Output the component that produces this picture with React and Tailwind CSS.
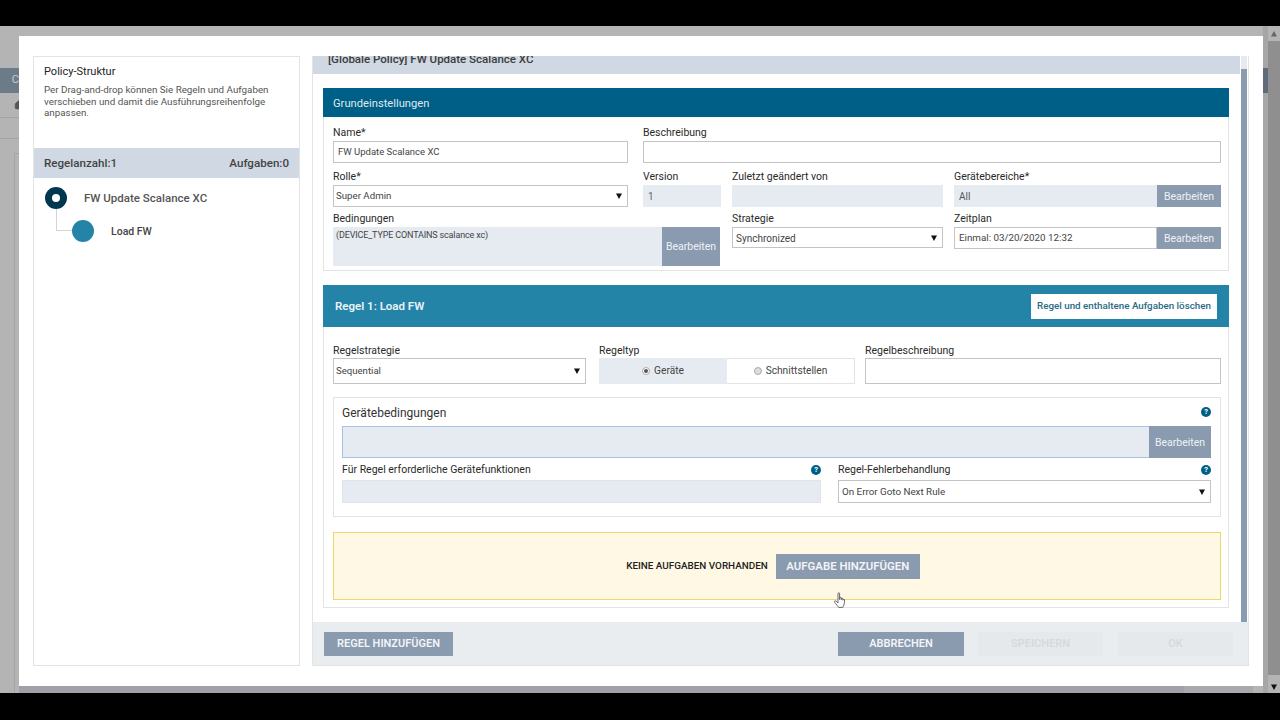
import React from "react";
import { House } from "lucide-react";

const Label = ({ children, className = "h-[18px]" }) => (
  <div className={`text-[10.5px] leading-[20px] text-[#2a2a2a] whitespace-nowrap ${className}`}>
    {children}
  </div>
);

const Caret = ({ className = "", color = "#111111" }) => (
  <svg width="6" height="6" viewBox="0 0 6 6" className={`shrink-0 ${className}`}>
    <polygon points="0,0.5 6,0.5 3,6" fill={color} />
  </svg>
);

const EditButton = ({ className = "" }) => (
  <div className={`flex items-center justify-center bg-[#8a9bb0] pt-[1px] text-[10.5px] text-[#eef1f5] ${className}`}>
    Bearbeiten
  </div>
);

const Help = ({ className = "" }) => (
  <span className={`flex h-[10px] w-[10px] items-center justify-center rounded-full bg-[#005f87] text-[7.5px] font-bold leading-none text-white ${className}`}>
    ?
  </span>
);

const HandCursor = () => (
  <svg className="absolute left-[833px] top-[592px]" width="15" height="18" viewBox="0 0 14 18">
    <path
      d="M4.5 1.5c0-1 1.6-1 1.6 0v6l.2-1.5c.2-.9 1.5-.8 1.5.1v1.6l.2-1c.2-.8 1.4-.7 1.4.2v1.3l.3-.6c.3-.7 1.3-.5 1.3.3 0 1.6-.1 3.8-.6 5.1-.5 1.3-1.1 2.4-1.1 2.4H5.2S3.8 13.6 2.6 12.1C1.8 11.1.8 10 1 9.3c.2-.7 1-.8 1.6-.2l1.9 1.8z"
      fill="#ffffff"
      stroke="#444444"
      strokeWidth="0.8"
    />
  </svg>
);

export default function App() {
  return (
    <div className="relative flex h-[720px] w-[1280px] flex-col overflow-hidden bg-black font-['Roboto',sans-serif]">
      <div className="h-[26px] shrink-0 bg-black" />

      <div className="flex h-[667px] shrink-0 bg-[#b4b4b4]">
        {/* page behind the dialog, left edge */}
        <div className="flex w-[19px] shrink-0 flex-col pt-[42px]">
          <div className="flex h-[25px] items-center justify-end bg-[#6b7b88] text-[11px] text-[#c8ced3]">C</div>
          <div className="flex h-[25px] items-center overflow-hidden border-b border-[#a5a5a5] pl-[14px]">
            <House size={10} fill="#555555" className="shrink-0 text-[#555]" />
          </div>
          <div className="h-[21px] border-b border-[#a5a5a5]" />
          <div className="ml-[14px] mt-[14px] flex-1 border-l border-t border-[#a5a5a5]" />
        </div>

        <div className="flex w-[1244px] shrink-0 flex-col">
          <div className="h-[10px] shrink-0" />
          <div className="flex h-[650px] shrink-0 gap-[12px] bg-white pl-[14px] pr-[14px] pt-[20px] pb-[20px]">
            {/* Policy-Struktur */}
            <div className="flex w-[267px] shrink-0 flex-col border border-[#e3e3e3]">
              <div className="h-[91px] shrink-0 px-[10px] pt-[8px]">
                <div className="text-[11px] leading-[14px] text-[#222]">Policy-Struktur</div>
                <div className="mt-[5px] text-[9.8px] leading-[11.5px] text-[#555]">
                  Per Drag-and-drop können Sie Regeln und Aufgaben
                  <br />
                  verschieben und damit die Ausführungsreihenfolge
                  <br />
                  anpassen.
                </div>
              </div>
              <div className="flex h-[30px] shrink-0 items-center justify-between bg-[#cfd8e3] px-[10px] pt-[1px] text-[11.6px] font-medium text-[#444]">
                <span>Regelanzahl:1</span>
                <span>Aufgaben:0</span>
              </div>
              <div className="pl-[11px] pt-[9px]">
                <div className="flex items-center">
                  <span className="flex h-[22px] w-[22px] items-center justify-center rounded-full bg-[#00384f]">
                    <span className="h-[8px] w-[8px] rounded-full bg-white" />
                  </span>
                  <span className="ml-[17px] pt-[1px] text-[11.5px] font-medium text-[#555]">FW Update Scalance XC</span>
                </div>
                <div className="relative mt-[11px] flex items-center pl-[27px]">
                  <span className="absolute left-[11px] top-[-11px] h-[22px] w-[16px] border-b border-l border-[#d4d4d4]" />
                  <span className="h-[22px] w-[22px] rounded-full bg-[#2484a8]" />
                  <span className="ml-[17px] pt-[1px] text-[10.5px] font-medium text-[#444]">Load FW</span>
                </div>
              </div>
            </div>

            {/* Editor */}
            <div className="flex w-[937px] shrink-0 flex-col border-b border-r border-l border-[#e3e3e3]">
              <div className="flex h-[566px] shrink-0 overflow-hidden">
                <div className="flex w-[927px] shrink-0 flex-col">
                  <div className="h-[18px] shrink-0 overflow-hidden bg-[#cfd8e3] pl-[15px]">
                    <div className="mt-[-5px] text-[11.5px] font-medium leading-[16px] text-[#3c3c3c]">
                      [Globale Policy] FW Update Scalance XC
                    </div>
                  </div>

                  <div className="ml-[10px] w-[906px] mt-[14px] h-[183px] shrink-0 border border-[#e3e3e3]">
                    <div className="-mx-px -mt-px flex h-[29px] items-center bg-[#005f87] px-[10px] pt-[3px] text-[11.2px] text-[#dfe9ef]">
                      Grundeinstellungen
                    </div>
                    <div className="pl-[9px] pr-[7px] pt-[6px]">
                      <div className="flex h-[46px] gap-[15px]">
                        <div className="w-[295px] shrink-0">
                          <Label>Name*</Label>
                          <div className="flex h-[22px] items-center border border-[#c4c4c4] px-[4px] text-[9.5px] text-[#444]">
                            FW Update Scalance XC
                          </div>
                        </div>
                        <div className="min-w-0 flex-1">
                          <Label>Beschreibung</Label>
                          <div className="h-[22px] border border-[#c4c4c4]" />
                        </div>
                      </div>
                      <div className="mt-[-2px] flex h-[42px]">
                        <div className="w-[295px] shrink-0">
                          <Label>Rolle*</Label>
                          <div className="flex h-[22px] items-center justify-between border border-[#c4c4c4] pl-[2px] pr-[5px] text-[9.7px] text-[#444]">
                            Super Admin
                            <Caret />
                          </div>
                        </div>
                        <div className="ml-[15px] w-[78px] shrink-0">
                          <Label>Version</Label>
                          <div className="flex h-[22px] items-center bg-[#e6ebf2] px-[5px] text-[10px] text-[#666]">1</div>
                        </div>
                        <div className="ml-[11px] w-[211px] shrink-0">
                          <Label>Zuletzt geändert von</Label>
                          <div className="h-[22px] bg-[#e6ebf2]" />
                        </div>
                        <div className="ml-[11px] min-w-0 flex-1">
                          <Label>Gerätebereiche*</Label>
                          <div className="flex h-[22px]">
                            <div className="flex flex-1 items-center bg-[#e6ebf2] px-[5px] text-[10px] text-[#555]">All</div>
                            <EditButton className="w-[64px]" />
                          </div>
                        </div>
                      </div>
                      <div className="flex">
                        <div className="w-[387px] shrink-0">
                          <Label>Bedingungen</Label>
                          <div className="flex h-[39px]">
                            <div className="flex-1 bg-[#e6ebf2] px-[3px] pt-[2px] text-[9px] leading-[12px] tracking-[-0.15px] text-[#444]">
                              (DEVICE_TYPE CONTAINS scalance xc)
                            </div>
                            <EditButton className="w-[58px]" />
                          </div>
                        </div>
                        <div className="ml-[12px] w-[211px] shrink-0">
                          <Label>Strategie</Label>
                          <div className="flex h-[21px] items-center justify-between border border-[#c4c4c4] pl-[3px] pr-[5px] pt-[1px] text-[10px] text-[#444]">
                            Synchronized
                            <Caret />
                          </div>
                        </div>
                        <div className="ml-[11px] min-w-0 flex-1">
                          <Label>Zeitplan</Label>
                          <div className="flex h-[22px]">
                            <div className="flex flex-1 items-center border border-[#c4c4c4] px-[4px] text-[9.8px] text-[#444]">
                              Einmal: 03/20/2020 12:32
                            </div>
                            <EditButton className="w-[64px]" />
                          </div>
                        </div>
                      </div>
                    </div>
                  </div>

                  <div className="ml-[10px] w-[906px] mt-[14px] h-[323px] shrink-0 border border-[#e3e3e3]">
                    <div className="-mx-px -mt-px flex h-[42px] items-center justify-between bg-[#2484a8] pl-[12px] pr-[12px] text-[11.5px] font-semibold text-[#e8f2f6]">
                      <span className="pt-[1px]">Regel 1: Load FW</span>
                      <div className="flex h-[25px] w-[186px] items-center justify-center whitespace-nowrap bg-white text-[9.8px] font-medium text-[#2a6a85]">
                        Regel und enthaltene Aufgaben löschen
                      </div>
                    </div>
                    <div className="pl-[9px] pr-[7px] pt-[14px]">
                      <div className="flex">
                        <div className="w-[253px] shrink-0">
                          <Label className="h-[17px]">Regelstrategie</Label>
                          <div className="flex h-[26px] items-center justify-between border border-[#c4c4c4] pl-[2px] pr-[5px] text-[9.6px] text-[#444]">
                            Sequential
                            <Caret />
                          </div>
                        </div>
                        <div className="ml-[13px] w-[256px] shrink-0">
                          <Label className="h-[17px]">Regeltyp</Label>
                          <div className="flex h-[26px] text-[10.2px] text-[#444]">
                            <div className="flex w-[128px] items-center justify-center gap-[4px] bg-[#e6ebf2]">
                              <span className="flex h-[8px] w-[8px] items-center justify-center rounded-full border border-[#aaa] bg-white">
                                <span className="h-[4px] w-[4px] rounded-full bg-[#555]" />
                              </span>
                              Geräte
                            </div>
                            <div className="flex flex-1 items-center justify-center gap-[4px] border border-l-0 border-[#e3e3e3]">
                              <span className="h-[8px] w-[8px] rounded-full border border-[#aaa] bg-[#ddd]" />
                              Schnittstellen
                            </div>
                          </div>
                        </div>
                        <div className="ml-[10px] min-w-0 flex-1">
                          <Label className="h-[17px]">Regelbeschreibung</Label>
                          <div className="h-[26px] border border-[#c4c4c4]" />
                        </div>
                      </div>

                      <div className="mt-[13px] h-[120px] border border-[#e3e3e3] pl-[8px] pr-[9px]">
                        <div className="flex h-[28px] items-center justify-between">
                          <span className="pt-[2px] text-[12px] text-[#333]">Gerätebedingungen</span>
                          <Help />
                        </div>
                        <div className="flex h-[32px]">
                          <div className="flex-1 border border-r-0 border-[#a9c1e3] bg-[#e6ebf2]" />
                          <EditButton className="w-[62px]" />
                        </div>
                        <div className="flex">
                          <div className="w-[479px] shrink-0">
                            <div className="flex h-[22px] items-center justify-between">
                              <Label>Für Regel erforderliche Gerätefunktionen</Label>
                              <Help className="mt-[1px]" />
                            </div>
                            <div className="h-[23px] border border-[#e0e4ea] bg-[#e6ebf2]" />
                          </div>
                          <div className="ml-[17px] min-w-0 flex-1">
                            <div className="flex h-[22px] items-center justify-between">
                              <Label>Regel-Fehlerbehandlung</Label>
                              <Help className="mt-[1px]" />
                            </div>
                            <div className="flex h-[23px] items-center justify-between border border-[#c4c4c4] pl-[3px] pr-[5px] pt-[1px] text-[9.8px] text-[#444]">
                              On Error Goto Next Rule
                              <Caret />
                            </div>
                          </div>
                        </div>
                      </div>

                      <div className="mt-[15px] flex h-[68px] items-center justify-center gap-[8px] border border-[#ecd96a] bg-[#fff8e4] pr-[8px]">
                        <span className="text-[9.9px] font-medium text-[#222]">KEINE AUFGABEN VORHANDEN</span>
                        <div className="flex h-[25px] w-[144px] items-center justify-center bg-[#8a9bb0] pt-[1px] text-[11.4px] font-semibold text-[#f2f4f7]">
                          AUFGABE HINZUFÜGEN
                        </div>
                      </div>
                    </div>
                  </div>
                </div>

                {/* scrollbar of the editor */}
                <div className="ml-[1px] flex w-[6px] shrink-0 flex-col bg-[#e6ebf2]">
                  <div className="mt-[13px] flex-1 bg-[#8a9bb0]" />
                </div>
              </div>

              <div className="flex h-[43px] shrink-0 items-start bg-[#e9edf0] pl-[11px] pt-[10px] text-[11px] font-semibold">
                <div className="flex h-[24px] w-[129px] items-center justify-center bg-[#8a9bb0] pt-[1px] text-[#f2f4f7]">
                  REGEL HINZUFÜGEN
                </div>
                <div className="ml-[385px] flex h-[24px] w-[126px] items-center justify-center bg-[#8a9bb0] pt-[1px] text-[#f2f4f7]">
                  ABBRECHEN
                </div>
                <div className="ml-[14px] flex h-[24px] w-[125px] items-center justify-center bg-[#e6e9eb] pt-[1px] text-[#d6d9dc]">
                  SPEICHERN
                </div>
                <div className="ml-[15px] flex h-[24px] w-[115px] items-center justify-center bg-[#e6e9eb] pt-[1px] text-[#d6d9dc]">
                  OK
                </div>
              </div>
            </div>
          </div>
          {/* horizontal scrollbar behind the dialog */}
          <div className="flex h-[7px] shrink-0 items-stretch">
            <div className="w-[1165px] bg-[#9fa0a8]" />
            <div className="w-[69px] bg-[#a9a9ad]" />
          </div>
        </div>

        {/* page behind the dialog, right edge */}
        <div className="flex w-[17px] shrink-0">
          <div className="flex w-[5px] shrink-0 flex-col bg-[#a6a6a6] pt-[42px]">
            <div className="h-[25px] bg-[#5f6b78]" />
          </div>
          <div className="flex flex-1 flex-col">
            <div className="flex h-[15px] shrink-0 items-center justify-center pt-[1px]">
              <Caret className="rotate-180" color="#666666" />
            </div>
            <div className="flex-1 bg-[#8f8f8f]" />
            <div className="flex h-[18px] shrink-0 items-center justify-center pt-[6px]">
              <Caret />
            </div>
          </div>
        </div>
      </div>

      <div className="flex-1 bg-black" />
      <HandCursor />
    </div>
  );
}
